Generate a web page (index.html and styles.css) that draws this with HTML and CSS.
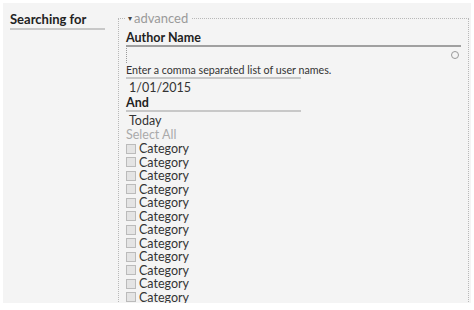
FILE: index.html
```html
<!DOCTYPE html>
<html lang="en">
<head>
  <meta charset="UTF-8">
  <title>Search</title>
  <link rel="stylesheet" href="styles.css">
</head>
<body>
  <div class="panel">
    <div class="side">
      <div class="side-label">Searching for</div>
    </div>

    <fieldset class="advanced">
      <legend><span class="caret">&#9662;</span>advanced</legend>

      <div class="field-title first">Author Name</div>
      <div class="author-input">
        <span class="clear-icon"></span>
      </div>
      <div class="hint">Enter a comma separated list of user names.</div>

      <div class="date">1/01/2015</div>
      <div class="field-title underlined">And</div>
      <div class="date">Today</div>

      <div class="select-all">Select All</div>
      <ul class="categories">
        <li><span class="box"></span>Category</li>
        <li><span class="box"></span>Category</li>
        <li><span class="box"></span>Category</li>
        <li><span class="box"></span>Category</li>
        <li><span class="box"></span>Category</li>
        <li><span class="box"></span>Category</li>
        <li><span class="box"></span>Category</li>
        <li><span class="box"></span>Category</li>
        <li><span class="box"></span>Category</li>
        <li><span class="box"></span>Category</li>
        <li><span class="box"></span>Category</li>
        <li><span class="box"></span>Category</li>
      </ul>
    </fieldset>
  </div>
</body>
</html>
```

FILE: styles.css
```css
* {
  margin: 0;
  padding: 0;
  box-sizing: border-box;
  font-family: Lato, 'Open Sans', sans-serif;
}

body {
  background-color: white;
  color: #333;
}

.panel {
  margin: 3px;
  height: 300px;
  overflow: hidden;
  background-color: #f4f4f4;
  display: flex;
  align-items: flex-start;
}

.side {
  width: 115px;
  flex-shrink: 0;
  padding: 8px 0 0 7px;
}

.side-label {
  width: 95px;
  font-size: 13px;
  font-weight: 700;
  color: #222;
  padding-bottom: 1px;
  border-bottom: 2px solid #c8c8c8;
}

.advanced {
  flex: 1;
  margin: 7px 2px 0 0;
  padding: 0 7px;
  border: 1px dotted #b8b8b8;
  min-height: 320px;
}

.advanced legend {
  padding: 0 4px 0 2px;
  font-size: 13px;
  color: #9a9a9a;
}

.caret {
  font-size: 8px;
  color: #444;
  margin-right: 2px;
  vertical-align: 2px;
}

.field-title {
  font-size: 12.5px;
  font-weight: 700;
  color: #222;
  line-height: 14px;
}

.first {
  margin-top: 5px;
}

.underlined {
  width: 175px;
  border-bottom: 2px solid #c8c8c8;
}

.author-input {
  position: relative;
  height: 18px;
  border-top: 2px solid #a0a0a0;
  border-left: 1px dotted #999;
}

.clear-icon {
  position: absolute;
  right: 2px;
  top: 4px;
  width: 8px;
  height: 8px;
  border: 1px solid #999;
  border-radius: 50%;
}

.hint {
  width: 175px;
  font-size: 10.7px;
  line-height: 14px;
  white-space: nowrap;
  border-bottom: 2px solid #c8c8c8;
}

.date {
  padding-left: 3px;
  font-size: 12.5px;
  line-height: 17px;
}

.select-all {
  margin-top: -1px;
  font-size: 12.5px;
  line-height: 14px;
  color: #aaa;
}

.categories {
  list-style: none;
}

.categories li {
  display: flex;
  align-items: center;
  gap: 3px;
  font-size: 12.5px;
  line-height: 13.5px;
}

.box {
  width: 10px;
  height: 10px;
  border: 1px solid #bbb;
  background-color: #e4e4e4;
}
```
